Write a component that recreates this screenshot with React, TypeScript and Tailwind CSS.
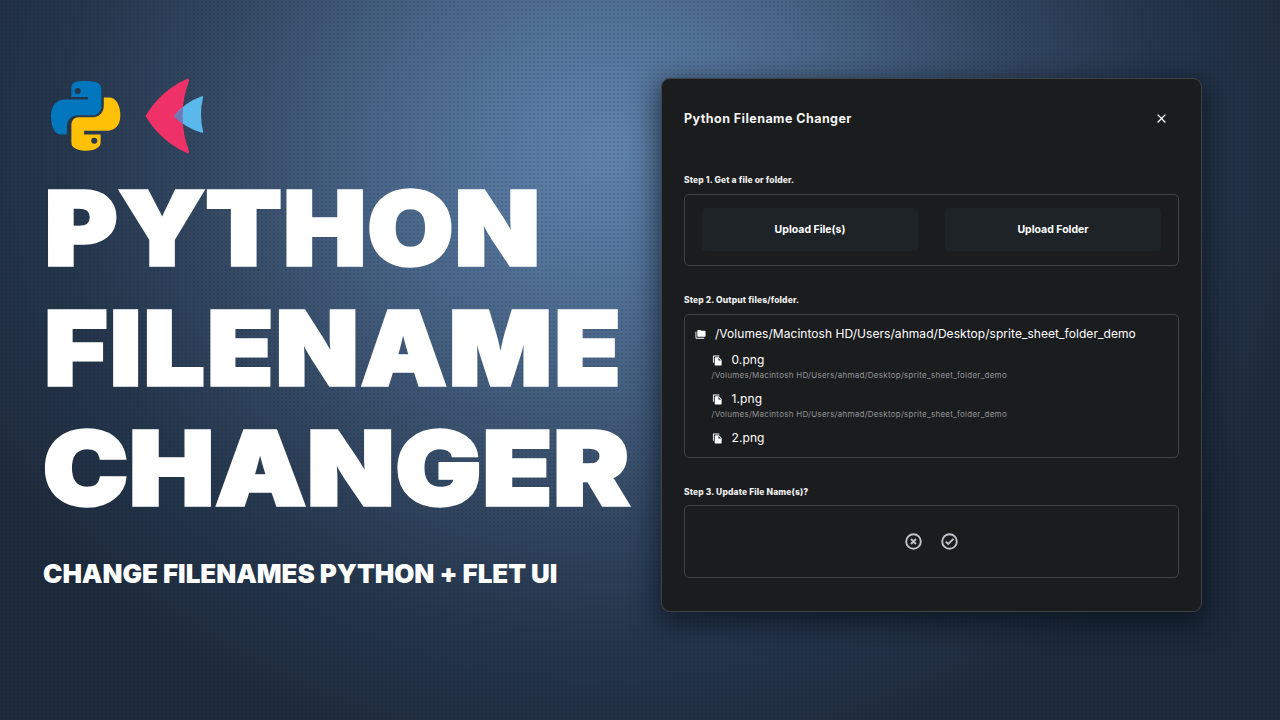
import React from 'react';
import { MdClose, MdFileCopy, MdFolderCopy } from 'react-icons/md';

interface FileEntry {
  name: string;
  path?: string;
}

const FOLDER = '/Volumes/Macintosh HD/Users/ahmad/Desktop/sprite_sheet_folder_demo';

const files: FileEntry[] = [
  { name: '0.png', path: FOLDER },
  { name: '1.png', path: FOLDER },
  { name: '2.png' },
];

function PythonLogo() {
  return (
    <svg className="h-[70px] w-[70px]" viewBox="0 0 110 110">
      <path
        fill="#0277bd"
        d="M54.4 0C48 0 42.4.6 38 1.7 33.5 3 32 7 32 12v13h26v4H23C9 29 0 38 0 55c0 17 6 29 15 29h10V71c0-10 8-17 17-17h23c8 0 14-7 14-14V13c0-7-5-11-11-12C63.8.3 59 0 54.4 0zM42 11a4.800 4.800 0 1 1 0 9.600 4.800 4.800 0 0 1 0-9.600z"
      />
      <path
        fill="#ffc107"
        d="M83 26v13c0 11-8 18-17 18H43c-8 0-11 7-11 13v26c0 8 5 10 11 12 8 2 16 2 24 0 6-2 11-5 11-12V84H52v-6h38c10 0 19-8 19-24 0-17-8-28-17-28zM68 89a4.800 4.800 0 1 1 0 9.600 4.800 4.800 0 0 1 0-9.600z"
      />
    </svg>
  );
}

function FletLogo() {
  return (
    <svg className="h-[76px] w-[60px]" viewBox="0 0 60 76">
      <path fill="#ee3167" d="M43 0.500Q16 12 0.500 38Q16 64 43 75.500Q44.500 75 44 73Q31 38 44 3Q44.500 1 43 0.500Z" />
      <path fill="#5bb8ea" d="M57.500 18Q40 24 29 38Q40 50 57.500 55Q58.500 54.500 58 53Q54 36 58 20Q58.500 18.500 57.500 18Z" />
      <path fill="#6f79b5" d="M38 29.500Q33 33 29 38Q33 42.500 38 46Q37 38 38 29.500Z" />
    </svg>
  );
}

function StepLabel({ children }: { children: React.ReactNode }) {
  return (
    <p className="h-3 whitespace-nowrap text-[8.500px] leading-[14px] font-extrabold tracking-[0.13px] text-[#eeeff0]">
      {children}
    </p>
  );
}

function UploadButton({ label }: { label: string }) {
  return (
    <button className="h-[43px] w-[216px] rounded-[4px] bg-[#1e2327] pt-[2px] text-[10.500px] font-bold text-white">
      {label}
    </button>
  );
}

function ChangerWindow() {
  return (
    <div className="flex h-[534px] w-[541px] flex-col rounded-[9px] border border-[#414446] bg-[#1b1c1e] px-[22px] pt-[30px] shadow-[0_8px_26px_4px_rgba(7,14,25,0.65)]">
      <div className="flex h-[20px] items-center justify-between pr-[10px]">
        <h2 className="pt-px text-[12.500px] font-bold tracking-[0.45px] text-[#f3f4f4]">
          Python Filename Changer
        </h2>
        <MdClose className="mb-[2px] h-[15px] w-[15px] text-white" />
      </div>

      <div className="mt-[44px]">
        <StepLabel>Step 1. Get a file or folder.</StepLabel>
      </div>
      <div className="mt-[9px] flex h-[72px] items-center justify-between rounded-[5px] border border-[#414446] px-[17px] pb-[2px]">
        <UploadButton label="Upload File(s)" />
        <UploadButton label="Upload Folder" />
      </div>

      <div className="mt-[27px]">
        <StepLabel>Step 2. Output files/folder.</StepLabel>
      </div>
      <div className="mt-[9px] h-[144px] rounded-[5px] border border-[#414446] pt-[9px] pl-[10px]">
        <div className="flex h-[20px] items-center gap-[9px]">
          <MdFolderCopy className="h-[11px] w-[11px] text-white" />
          <span className="whitespace-nowrap text-[12px] tracking-[0.05px] text-white">{FOLDER}</span>
        </div>
        <div className="mt-[6px] pl-[16.500px]">
          {files.map((file) => (
            <div key={file.name} className="h-[39px]">
              <div className="flex h-5 items-center gap-[9px]">
                <MdFileCopy className="h-[11px] w-[11px] text-white" />
                <span className="text-[12px] tracking-[0.1px] text-white">{file.name}</span>
              </div>
              {file.path && (
                <p className="whitespace-nowrap text-[8px] leading-[11px] tracking-[0.26px] text-[#949597]">
                  {file.path}
                </p>
              )}
            </div>
          ))}
        </div>
      </div>

      <div className="mt-[27px]">
        <StepLabel>Step 3. Update File Name(s)?</StepLabel>
      </div>
      <div className="mt-[8px] flex h-[73px] items-center justify-center gap-[19px] rounded-[5px] border border-[#414446] text-[#c2c3c9]">
        <svg className="h-[17px] w-[17px]" viewBox="0 0 17 17" fill="none" stroke="currentColor" strokeWidth="1.900">
          <circle cx="8.500" cy="8.500" r="7.300" />
          <path d="M6 6l5 5M11 6l-5 5" />
        </svg>
        <svg className="h-[17px] w-[17px]" viewBox="0 0 17 17" fill="none" stroke="currentColor" strokeWidth="1.900">
          <circle cx="8.500" cy="8.500" r="7.300" />
          <path d="M4.700 8.600l2.500 2.400L12.500 5.900" />
        </svg>
      </div>
    </div>
  );
}

export default function App() {
  return (
    <div className="flex h-[720px] w-[1280px] overflow-hidden bg-[#1f2d40] bg-[radial-gradient(rgba(8,16,28,0.14)_0.6px,transparent_1.5px),radial-gradient(ellipse_660px_580px_at_610px_150px,#6083ac_0%,#54749a_20%,#456081_40%,#324660_64%,#25364c_84%,#1d2a3b_110%)] bg-[size:4px_4px,100%_100%] font-['Inter',sans-serif]">
      <div className="flex w-[661px] shrink-0 flex-col pt-[78px] pl-[43px] text-white">
        <div className="flex items-center gap-[24px] pl-[8px]">
          <PythonLogo />
          <FletLogo />
        </div>
        {/* the stroke and the horizontal stretch give the extra-wide poster weight */}
        <h1 className="mt-[14px] flex flex-col text-[101.500px] leading-[120px] font-black whitespace-nowrap [-webkit-text-stroke:3.500px_white]">
          <span className="origin-left scale-x-[1.09] pl-[1.500px] tracking-[1.300px]">PYTHON</span>
          <span className="origin-left scale-x-[1.06] pl-[1.500px] tracking-[2.400px]">FILENAME</span>
          <span className="origin-left scale-x-[1.12] tracking-[1px]">CHANGER</span>
        </h1>
        <p className="mt-[30px] text-[26px] leading-[32px] font-black tracking-[-0.05px] whitespace-nowrap">
          CHANGE FILENAMES PYTHON + FLET UI
        </p>
      </div>
      <div className="pt-[78px]">
        <ChangerWindow />
      </div>
    </div>
  );
}
